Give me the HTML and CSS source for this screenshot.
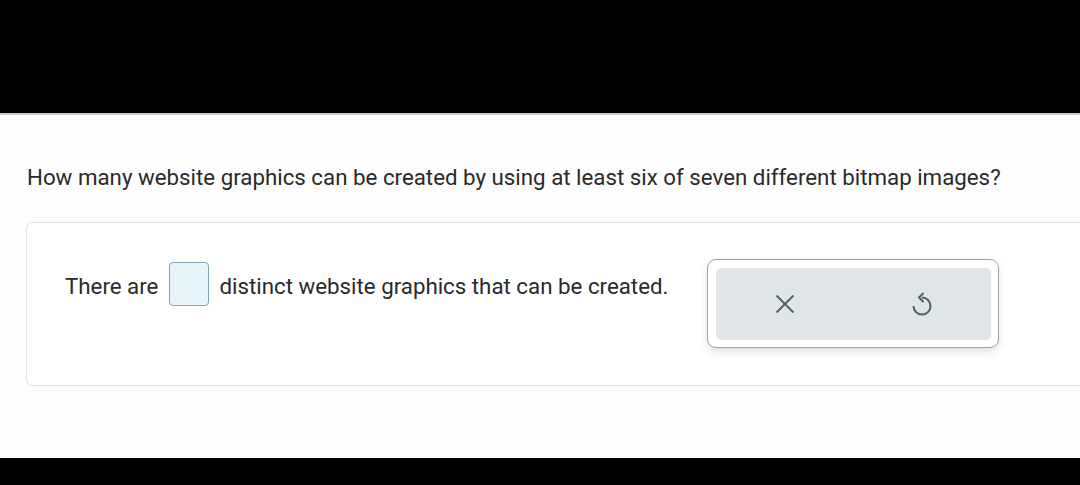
FILE: index.html
```html
<!DOCTYPE html>
<html>
<head>
<meta charset="utf-8">
<link rel="stylesheet" href="styles.css">
</head>
<body>
<div class="topbar"></div>
<main class="content">
  <p class="question">How many website graphics can be created by using at least six of seven different bitmap images?</p>
  <section class="card">
    <div class="answer">
      <span class="txt">There are</span>
      <span class="blank"></span>
      <span class="txt">distinct website graphics that can be created.</span>
    </div>
    <div class="tools">
      <div class="tools-inner">
        <button class="tool" aria-label="clear">
          <svg width="22" height="22" viewBox="0 0 22 22"><path d="M2.5 2.5 L19.5 19.5 M19.5 2.5 L2.5 19.5" stroke="#4f6469" stroke-width="1.9" fill="none"/></svg>
        </button>
        <button class="tool" aria-label="undo">
          <svg width="24" height="26" viewBox="0 0 24 26"><path d="M12 6.5 A8.5 8.5 0 1 1 3.5 15" stroke="#4f6469" stroke-width="2" fill="none"/><path d="M13.5 2 L9 6.5 L13.5 11" stroke="#4f6469" stroke-width="2" fill="none"/></svg>
        </button>
      </div>
    </div>
  </section>
</main>
<div class="bottombar"></div>
</body>
</html>
```
FILE: styles.css
```css
html, body {
  margin: 0;
  padding: 0;
  background: #000;
  width: 1080px;
  height: 485px;
  overflow: hidden;
  font-family: Roboto, "Liberation Sans", sans-serif;
}
.topbar {
  height: 113px;
  background: #000;
}
.content {
  height: 343px;
  background: #fdfdfd;
  border-top: 2px solid #c8cccd;
  padding: 0 0 0 26px;
  box-sizing: content-box;
}
.question {
  margin: 0;
  padding-top: 47px;
  padding-left: 1px;
  font-size: 22.3px;
  line-height: 30px;
  color: #2a2a2a;
}
.card {
  margin-top: 30px;
  height: 164px;
  border: 1px solid #e1e6e7;
  border-right: none;
  border-radius: 6px 0 0 6px;
  background: #fff;
  display: flex;
  align-items: flex-start;
  padding-left: 38px;
  box-sizing: border-box;
}
.answer {
  display: flex;
  align-items: center;
  gap: 10px;
  margin-top: 39px;
  font-size: 22.3px;
  color: #2a2a2a;
}
.txt {
  padding-top: 4px;
}
.blank {
  width: 38px;
  height: 42px;
  border: 1px solid #7ea8b2;
  border-radius: 4px;
  background: #e8f5f8;
  margin-left: 1px;
}
.tools {
  margin-left: 39px;
  margin-top: 36px;
  width: 292px;
  height: 89px;
  box-sizing: border-box;
  border: 1.5px solid #9aa5a8;
  border-radius: 9px;
  background: #fff;
  padding: 7.5px;
  box-shadow: 0 4px 8px rgba(0,0,0,0.12);
}
.tools-inner {
  height: 100%;
  background: #dfe5e8;
  border-radius: 5px;
  display: flex;
  align-items: center;
  justify-content: space-around;
}
.tool {
  border: none;
  background: transparent;
  padding: 0;
  width: 40px;
  height: 40px;
  display: flex;
  align-items: center;
  justify-content: center;
}
.bottombar {
  height: 27px;
  background: #000;
}
```
